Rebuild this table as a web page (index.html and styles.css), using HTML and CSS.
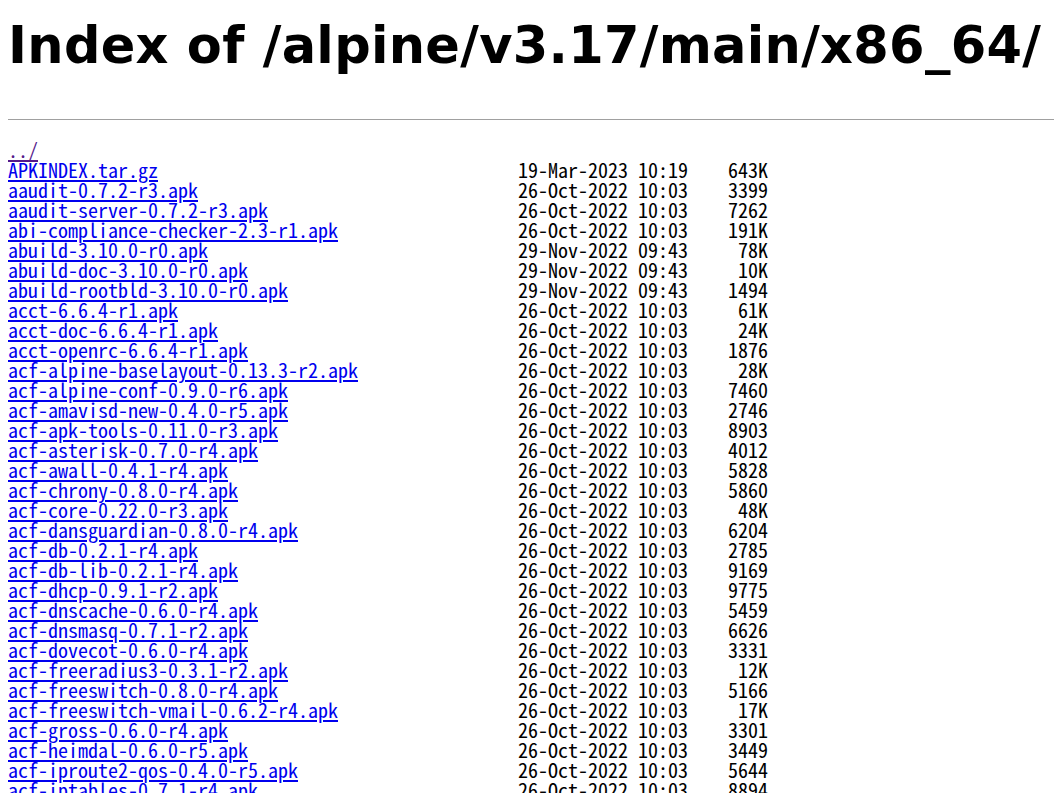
FILE: index.html
```html
<!DOCTYPE html>
<html>
<head>
<meta charset="utf-8">
<title>Index of /alpine/v3.17/main/x86_64/</title>
<link rel="stylesheet" href="styles.css">
</head>
<body>
<h1 class="title">Index of /alpine/v3.17/main/x86_64/</h1>
<hr class="rule">
<div class="listing">
  <div class="row"><a class="name visited" href="#">../</a></div>
  <div class="row"><a class="name" href="#">APKINDEX.tar.gz</a><span class="date">19-Mar-2023 10:19</span><span class="size">643K</span></div>
  <div class="row"><a class="name" href="#">aaudit-0.7.2-r3.apk</a><span class="date">26-Oct-2022 10:03</span><span class="size">3399</span></div>
  <div class="row"><a class="name" href="#">aaudit-server-0.7.2-r3.apk</a><span class="date">26-Oct-2022 10:03</span><span class="size">7262</span></div>
  <div class="row"><a class="name" href="#">abi-compliance-checker-2.3-r1.apk</a><span class="date">26-Oct-2022 10:03</span><span class="size">191K</span></div>
  <div class="row"><a class="name" href="#">abuild-3.10.0-r0.apk</a><span class="date">29-Nov-2022 09:43</span><span class="size">78K</span></div>
  <div class="row"><a class="name" href="#">abuild-doc-3.10.0-r0.apk</a><span class="date">29-Nov-2022 09:43</span><span class="size">10K</span></div>
  <div class="row"><a class="name" href="#">abuild-rootbld-3.10.0-r0.apk</a><span class="date">29-Nov-2022 09:43</span><span class="size">1494</span></div>
  <div class="row"><a class="name" href="#">acct-6.6.4-r1.apk</a><span class="date">26-Oct-2022 10:03</span><span class="size">61K</span></div>
  <div class="row"><a class="name" href="#">acct-doc-6.6.4-r1.apk</a><span class="date">26-Oct-2022 10:03</span><span class="size">24K</span></div>
  <div class="row"><a class="name" href="#">acct-openrc-6.6.4-r1.apk</a><span class="date">26-Oct-2022 10:03</span><span class="size">1876</span></div>
  <div class="row"><a class="name" href="#">acf-alpine-baselayout-0.13.3-r2.apk</a><span class="date">26-Oct-2022 10:03</span><span class="size">28K</span></div>
  <div class="row"><a class="name" href="#">acf-alpine-conf-0.9.0-r6.apk</a><span class="date">26-Oct-2022 10:03</span><span class="size">7460</span></div>
  <div class="row"><a class="name" href="#">acf-amavisd-new-0.4.0-r5.apk</a><span class="date">26-Oct-2022 10:03</span><span class="size">2746</span></div>
  <div class="row"><a class="name" href="#">acf-apk-tools-0.11.0-r3.apk</a><span class="date">26-Oct-2022 10:03</span><span class="size">8903</span></div>
  <div class="row"><a class="name" href="#">acf-asterisk-0.7.0-r4.apk</a><span class="date">26-Oct-2022 10:03</span><span class="size">4012</span></div>
  <div class="row"><a class="name" href="#">acf-awall-0.4.1-r4.apk</a><span class="date">26-Oct-2022 10:03</span><span class="size">5828</span></div>
  <div class="row"><a class="name" href="#">acf-chrony-0.8.0-r4.apk</a><span class="date">26-Oct-2022 10:03</span><span class="size">5860</span></div>
  <div class="row"><a class="name" href="#">acf-core-0.22.0-r3.apk</a><span class="date">26-Oct-2022 10:03</span><span class="size">48K</span></div>
  <div class="row"><a class="name" href="#">acf-dansguardian-0.8.0-r4.apk</a><span class="date">26-Oct-2022 10:03</span><span class="size">6204</span></div>
  <div class="row"><a class="name" href="#">acf-db-0.2.1-r4.apk</a><span class="date">26-Oct-2022 10:03</span><span class="size">2785</span></div>
  <div class="row"><a class="name" href="#">acf-db-lib-0.2.1-r4.apk</a><span class="date">26-Oct-2022 10:03</span><span class="size">9169</span></div>
  <div class="row"><a class="name" href="#">acf-dhcp-0.9.1-r2.apk</a><span class="date">26-Oct-2022 10:03</span><span class="size">9775</span></div>
  <div class="row"><a class="name" href="#">acf-dnscache-0.6.0-r4.apk</a><span class="date">26-Oct-2022 10:03</span><span class="size">5459</span></div>
  <div class="row"><a class="name" href="#">acf-dnsmasq-0.7.1-r2.apk</a><span class="date">26-Oct-2022 10:03</span><span class="size">6626</span></div>
  <div class="row"><a class="name" href="#">acf-dovecot-0.6.0-r4.apk</a><span class="date">26-Oct-2022 10:03</span><span class="size">3331</span></div>
  <div class="row"><a class="name" href="#">acf-freeradius3-0.3.1-r2.apk</a><span class="date">26-Oct-2022 10:03</span><span class="size">12K</span></div>
  <div class="row"><a class="name" href="#">acf-freeswitch-0.8.0-r4.apk</a><span class="date">26-Oct-2022 10:03</span><span class="size">5166</span></div>
  <div class="row"><a class="name" href="#">acf-freeswitch-vmail-0.6.2-r4.apk</a><span class="date">26-Oct-2022 10:03</span><span class="size">17K</span></div>
  <div class="row"><a class="name" href="#">acf-gross-0.6.0-r4.apk</a><span class="date">26-Oct-2022 10:03</span><span class="size">3301</span></div>
  <div class="row"><a class="name" href="#">acf-heimdal-0.6.0-r5.apk</a><span class="date">26-Oct-2022 10:03</span><span class="size">3449</span></div>
  <div class="row"><a class="name" href="#">acf-iproute2-qos-0.4.0-r5.apk</a><span class="date">26-Oct-2022 10:03</span><span class="size">5644</span></div>
  <div class="row"><a class="name" href="#">acf-iptables-0.7.1-r4.apk</a><span class="date">26-Oct-2022 10:03</span><span class="size">8894</span></div>
</div>
</body>
</html>
```
FILE: styles.css
```css
html, body {
  background: #ffffff;
}
body {
  margin: 8px;
  color: #000000;
  overflow: hidden;
}
.title {
  margin: 8px 0 43px;
  font-family: "DejaVu Sans", "Noto Sans CJK JP", sans-serif;
  font-weight: bold;
  font-size: 51px;
  line-height: 60px;
  letter-spacing: 0.3px;
  white-space: nowrap;
}
.rule {
  border: 0;
  border-top: 1px solid #a0a0a0;
  height: 0;
  margin: 0 -8px 20px 0;
}
.listing {
  font-family: "Noto Sans Mono CJK JP", "Liberation Mono", monospace;
  font-size: 20px;
  line-height: 20px;
}
.row {
  display: grid;
  grid-template-columns: 510px 170px 80px;
  height: 20px;
  white-space: pre;
}
.name {
  color: #0000ee;
  text-decoration: underline;
  text-decoration-thickness: 2px;
  text-underline-offset: 2px;
  justify-self: start;
}
.name.visited {
  color: #551a8b;
}
.date {
  grid-column: 2;
}
.size {
  grid-column: 3;
  text-align: right;
}
```
